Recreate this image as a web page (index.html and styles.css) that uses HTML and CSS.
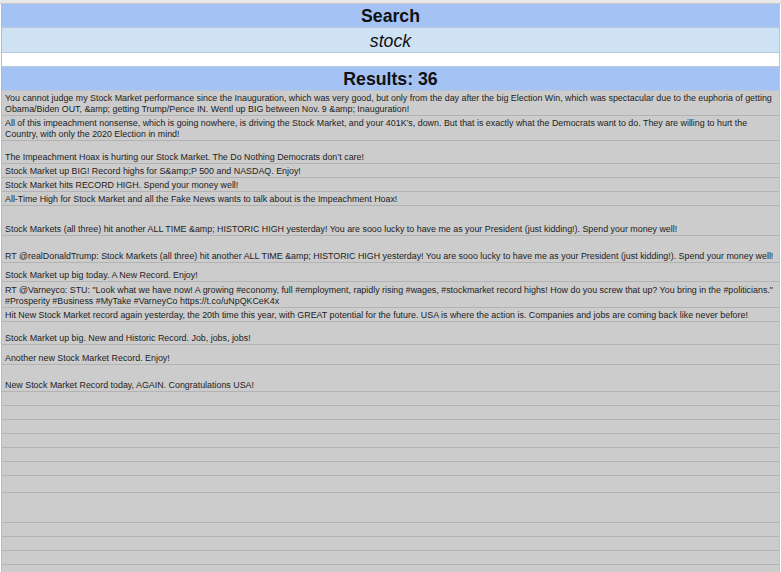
FILE: index.html
```html
<!DOCTYPE html>
<html lang="en">
<head>
  <meta charset="UTF-8">
  <meta name="viewport" content="width=device-width, initial-scale=1">
  <title>Search</title>
  <link rel="stylesheet" href="styles.css">
</head>
<body>
  <div class="topbar"></div>
  <div class="sheet">
    <div class="head">Search</div>
    <div class="query">stock</div>
    <div class="spacer"></div>
    <div class="head">Results: 36</div>

    <div class="row h25">You cannot judge my Stock Market performance since the Inauguration, which was very good, but only from the day after the big Election Win, which was spectacular due to the euphoria of getting<br>Obama/Biden OUT, &amp;amp; getting Trump/Pence IN. Wentl up BIG between Nov. 9 &amp;amp; Inauguration!</div>
    <div class="row h25">All of this impeachment nonsense, which is going nowhere, is driving the Stock Market, and your 401K’s, down. But that is exactly what the Democrats want to do. They are willing to hurt the<br>Country, with only the 2020 Election in mind!</div>
    <div class="row h23">The Impeachment Hoax is hurting our Stock Market. The Do Nothing Democrats don’t care!</div>
    <div class="row">Stock Market up BIG! Record highs for S&amp;amp;P 500 and NASDAQ. Enjoy!</div>
    <div class="row">Stock Market hits RECORD HIGH. Spend your money well!</div>
    <div class="row">All-Time High for Stock Market and all the Fake News wants to talk about is the Impeachment Hoax!</div>
    <div class="row h30">Stock Markets (all three) hit another ALL TIME &amp;amp; HISTORIC HIGH yesterday! You are sooo lucky to have me as your President (just kidding!). Spend your money well!</div>
    <div class="row h27">RT @realDonaldTrump: Stock Markets (all three) hit another ALL TIME &amp;amp; HISTORIC HIGH yesterday! You are sooo lucky to have me as your President (just kidding!). Spend your money well!</div>
    <div class="row h19">Stock Market up big today. A New Record. Enjoy!</div>
    <div class="row h26">RT @Varneyco: STU: "Look what we have now! A growing #economy, full #employment, rapidly rising #wages, #stockmarket record highs! How do you screw that up? You bring in the #politicians."<br>#Prosperity #Business #MyTake #VarneyCo https://t.co/uNpQKCeK4x</div>
    <div class="row">Hit New Stock Market record again yesterday, the 20th time this year, with GREAT potential for the future. USA is where the action is. Companies and jobs are coming back like never before!</div>
    <div class="row h23">Stock Market up big. New and Historic Record. Job, jobs, jobs!</div>
    <div class="row h20">Another new Stock Market Record. Enjoy!</div>
    <div class="row h27">New Stock Market Record today, AGAIN. Congratulations USA!</div>
    <div class="row"></div>
    <div class="row"></div>
    <div class="row"></div>
    <div class="row"></div>
    <div class="row"></div>
    <div class="row"></div>
    <div class="row h17"></div>
    <div class="row h30"></div>
    <div class="row"></div>
    <div class="row"></div>
    <div class="row"></div>
    <div class="row"></div>
  </div>
</body>
</html>
```

FILE: styles.css
```css
body {
  margin: 0;
  background: #fff;
  font-family: "Liberation Sans", Arial, sans-serif;
  color: #222;
  overflow: hidden;
}
.topbar {
  height: 3px;
  background: #e8e8e8;
  border-bottom: 1px solid #c8c8c8;
}
.sheet {
  margin-left: 1px;
  width: 777px;
  border-left: 1px solid #bcbcbc;
  border-right: 1px solid #c4c4c4;
  display: flex;
  flex-direction: column;
}
.head, .query {
  box-sizing: border-box;
  display: flex;
  align-items: center;
  justify-content: center;
  font-size: 17.7px;
  border-bottom: 1px solid #b7c7dc;
  padding-top: 2px;
  color: #111;
}
.head {
  height: 24px;
  background: #a4c2f4;
  font-weight: bold;
}
.query {
  height: 25px;
  background: #cfe2f3;
  font-style: italic;
  padding-top: 3px;
}
.spacer {
  height: 14px;
  box-sizing: border-box;
  background: #fff;
  border-bottom: 1px solid #b7c7dc;
}
.row {
  height: 14px;
  box-sizing: border-box;
  background: #cccccc;
  border-bottom: 1px solid #b3b3b3;
  display: flex;
  flex-direction: column;
  justify-content: flex-end;
  padding: 0 0 0 3px;
  font-size: 8.9px;
  line-height: 11px;
  white-space: nowrap;
  overflow: hidden;
}
.h17 { height: 17px; }
.h19 { height: 19px; }
.h20 { height: 20px; }
.h23 { height: 23px; }
.h25 { height: 25px; }
.h26 { height: 26px; }
.h27 { height: 27px; }
.h30 { height: 30px; }
```
